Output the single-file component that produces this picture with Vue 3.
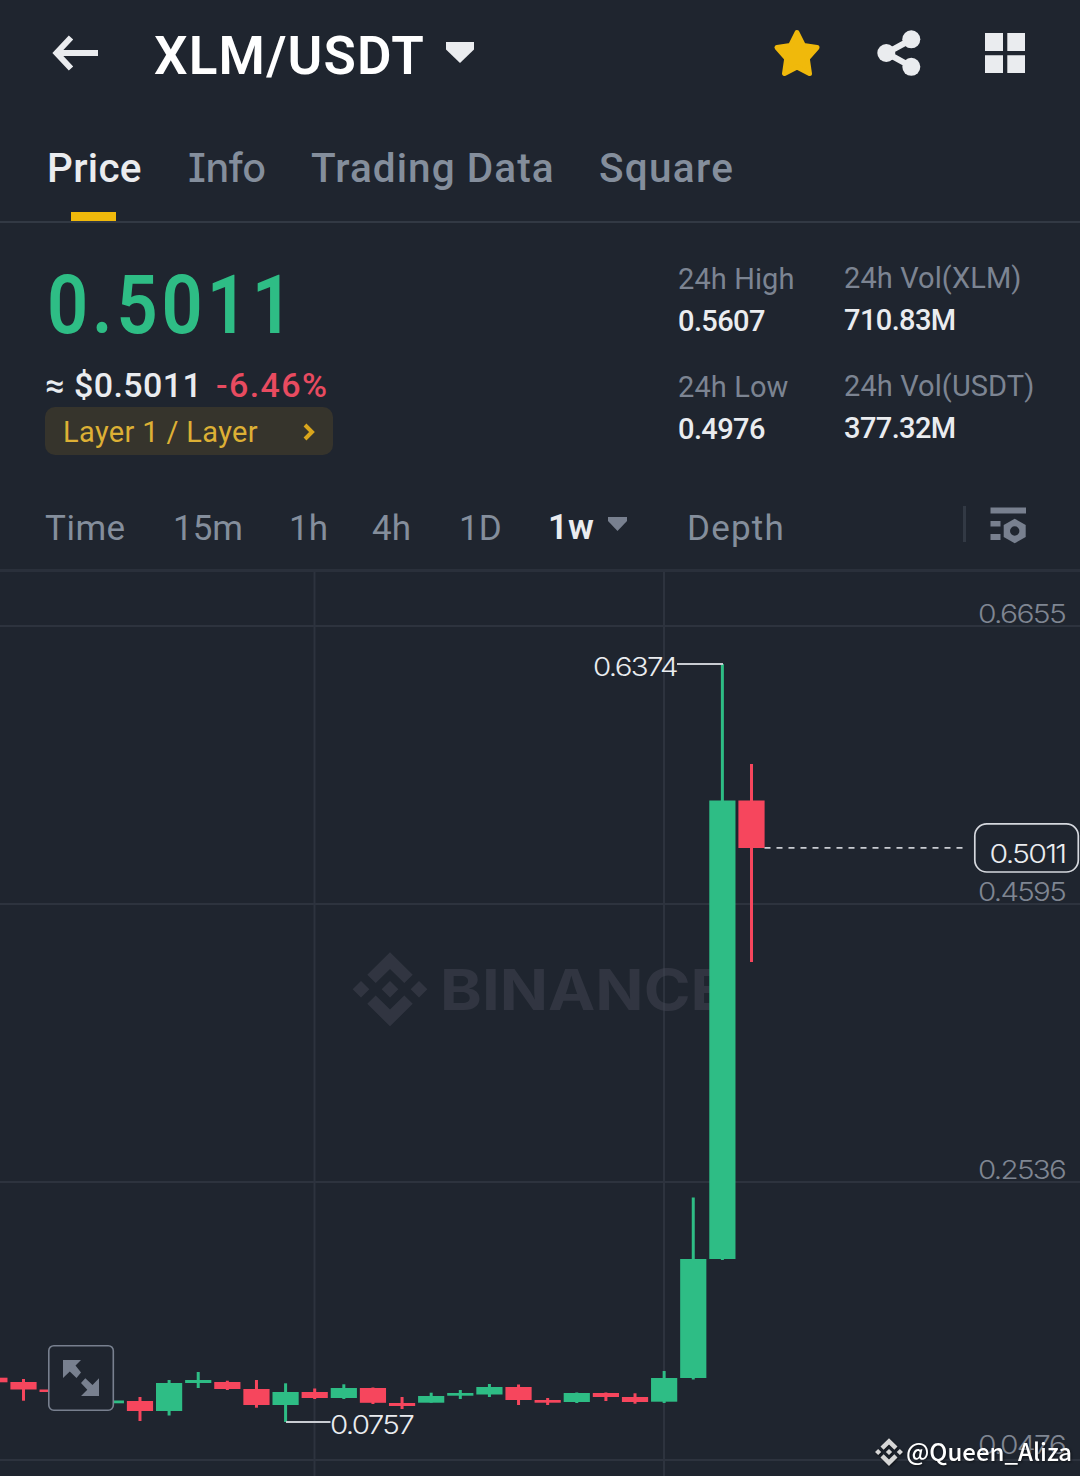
<script setup>
const tabs = [
  { label: 'Price', width: 94, gap: 0, spacing: 0.3, active: true },
  { label: 'Info', width: 77, gap: 47, spacing: -0.4, serifI: true },
  { label: 'Trading Data', width: 242, gap: 46, spacing: 1.05 },
  { label: 'Square', width: 134, gap: 46, spacing: 1.3 },
]

const stats = [
  [
    { label: '24h High', value: '0.5607' },
    { label: '24h Low', value: '0.4976' },
  ],
  [
    { label: '24h Vol(XLM)', value: '710.83M' },
    { label: '24h Vol(USDT)', value: '377.32M' },
  ],
]

const intervals = [
  { label: 'Time', width: 128 },
  { label: '15m', width: 116 },
  { label: '1h', width: 83 },
  { label: '4h', width: 87 },
  { label: '1D', width: 89 },
]

// Newest first: [rising, high, body top, body bottom, low]
const candleRows = [
  [0, 764, 800.5, 848, 962],
  [1, 664, 800.5, 1259, 1260],
  [1, 1197.5, 1259, 1378, 1379.5],
  [1, 1371, 1378, 1401.7, 1403],
  [0, 1393.3, 1397, 1402, 1403.7],
  [0, 1392.5, 1393, 1397, 1401],
  [1, 1392.5, 1393, 1402, 1403],
  [0, 1398, 1400, 1402.7, 1405],
  [0, 1384.5, 1387, 1400, 1405],
  [1, 1384, 1387, 1394.5, 1397],
  [1, 1390, 1393, 1395.7, 1399],
  [1, 1392.7, 1396, 1402.7, 1402.7],
  [0, 1397, 1403, 1406, 1409],
  [0, 1387.5, 1388, 1402.8, 1404],
  [1, 1384.3, 1388, 1398, 1399],
  [0, 1388.5, 1392, 1398, 1399],
  [1, 1383.3, 1392, 1405, 1422],
  [0, 1380, 1389, 1405, 1407.7],
  [0, 1380.7, 1382, 1389, 1390],
  [1, 1372, 1380, 1383, 1388],
  [1, 1380, 1383, 1411, 1415.5],
  [0, 1397, 1401, 1411, 1421],
  [1, 1400.5, 1400.5, 1403.3, 1403.3],
  [0, 1392, 1395, 1398, 1399],
  [0, 1389.5, 1389.5, 1392, 1392],
  [0, 1379, 1382, 1389.5, 1400.7],
  [0, 1377.7, 1377.7, 1382.3, 1382.3],
]
const candles = candleRows.map(([up, high, top, bottom, low], i) => ({
  x: 751.5 - i * 29.12,
  color: up ? '#2ebd85' : '#f6465d',
  high, top, bottom, low,
}))

const axis = [
  { label: '0.6655', y: 623 },
  { label: '0.4595', y: 901 },
  { label: '0.2536', y: 1179 },
  { label: '0.0476', y: 1454 },
]
const gridRows = [626, 904, 1182, 1460]
const gridCols = [314.5, 664]
</script>

<template>
  <div class="screen">
    <header class="header">
      <svg class="back" width="48" height="40" viewBox="51 33 48 40">
        <path d="M98 53H57M71 37.500L56.500 53L71 68.500" fill="none" stroke="#eaecef" stroke-width="6" />
      </svg>
      <h1 class="title">XLM/USDT</h1>
      <svg class="caret" width="28" height="22" viewBox="446 42 28 22">
        <path d="M446 42H474V49.500L460 63L446 49.500Z" fill="#eaecef" />
      </svg>
      <div class="actions">
        <svg width="48" height="50" viewBox="773 28 48 50">
          <path d="M797 32.500L803.500 45.500L817 47.500L807.300 58.500L809.500 73.500L797 67L784.500 73.500L786.700 58.500L777 47.500L790.500 45.500Z" fill="#f0b90b" stroke="#f0b90b" stroke-width="5" stroke-linejoin="round" />
        </svg>
        <svg width="44" height="50" viewBox="877 28 44 50">
          <path d="M911.300 39.500L886.500 53L911.300 66.700" fill="none" stroke="#eaecef" stroke-width="6" />
          <g fill="#eaecef">
            <circle cx="911.300" cy="39.300" r="9" />
            <circle cx="886.300" cy="53" r="9" />
            <circle cx="911.300" cy="66.800" r="9" />
          </g>
        </svg>
        <svg width="40" height="40" viewBox="0 0 40 40">
          <path d="M0 0H18V18H0ZM22.300 0H40V18H22.300ZM0 22.300H18V40H0ZM22.300 22.300H40V40H22.300Z" fill="#eaecef" />
        </svg>
      </div>
    </header>

    <nav class="tabs">
      <div
        v-for="t in tabs"
        :key="t.label"
        class="tab"
        :class="{ active: t.active, 'serif-i': t.serifI }"
        :style="{ width: t.width + 'px', marginLeft: t.gap + 'px', letterSpacing: t.spacing + 'px' }"
      >{{ t.label }}</div>
    </nav>

    <section class="summary">
      <div class="quote">
        <div class="price">0.5011</div>
        <div class="sub">
          <span class="approx">≈</span>
          <span class="fiat">$0.5011</span>
          <span class="change">-6.46%</span>
        </div>
        <div class="tag">
          <span>Layer 1 / Layer</span>
          <svg width="12" height="18" viewBox="0 0 12 18">
            <path d="M2 2L9 9L2 16" fill="none" stroke="#d9a51c" stroke-width="4" />
          </svg>
        </div>
      </div>
      <div v-for="(col, i) in stats" :key="i" class="stats" :class="'stats-' + i">
        <template v-for="s in col" :key="s.label">
          <div class="stat-label">{{ s.label }}</div>
          <div class="stat-value">{{ s.value }}</div>
        </template>
      </div>
    </section>

    <div class="intervals">
      <span v-for="iv in intervals" :key="iv.label" :style="{ width: iv.width + 'px' }">{{ iv.label }}</span>
      <span class="selected">1w</span>
      <svg class="mini-caret" width="19" height="14" viewBox="0 0 19 14">
        <path d="M0 0H19V4L9.500 14L0 4Z" fill="#78808f" />
      </svg>
      <span class="depth">Depth</span>
      <i class="divider"></i>
      <svg class="settings" width="36" height="38" viewBox="990 506 36 38">
        <g fill="#78808f">
          <path d="M990.500 507.500H1026V513.500H990.500ZM990.500 521H1000.500V526.500H990.500ZM990.500 534H1000.500V540H990.500Z" />
          <path fill-rule="evenodd" d="M1014.700 518.700L1025.700 525V537L1014.700 543.300L1003.700 537V525ZM1014.700 526.300A4.700 4.700 0 1 0 1014.700 535.700A4.700 4.700 0 1 0 1014.700 526.300Z" />
        </g>
      </svg>
    </div>

    <svg class="chart" width="1080" height="904" viewBox="0 572 1080 904">
      <defs>
        <g id="mark">
          <path d="M0 -37L22.700 -14.500L14.300 -6.200L0 -20.300L-14.300 -6.200L-22.700 -14.500ZM0 37L22.700 14.500L14.300 6.200L0 20.300L-14.300 6.200L-22.700 14.500Z" />
          <path d="M0 -8.300L8.300 0L0 8.300L-8.300 0ZM-29 -8.300L-20.700 0L-29 8.300L-37.300 0ZM29 -8.300L37.300 0L29 8.300L20.700 0Z" />
        </g>
      </defs>

      <g stroke="#2d333e" stroke-width="2">
        <line v-for="y in gridRows" :key="y" x1="0" x2="1080" :y1="y" :y2="y" />
        <line v-for="x in gridCols" :key="x" y1="572" y2="1476" :x1="x" :x2="x" />
      </g>

      <g fill="#474a57" opacity="0.45">
        <use href="#mark" x="390" y="989.300" />
        <text class="brand" x="440" y="1010" textLength="289" lengthAdjust="spacingAndGlyphs">BINANCE</text>
      </g>

      <g v-for="c in candles" :key="c.x" :fill="c.color">
        <rect :x="c.x - 1.500" :y="c.high" width="3" :height="c.low - c.high" />
        <rect :x="c.x - 13.100" :y="c.top" width="26.200" :height="c.bottom - c.top" />
      </g>

      <g stroke="#c9ccd2" stroke-width="1.800">
        <line x1="677" x2="723" y1="664" y2="664" />
        <line x1="286" x2="330.500" y1="1422" y2="1422" />
        <line x1="764.500" x2="963" y1="847.800" y2="847.800" stroke-dasharray="6 6" />
      </g>

      <g class="num" fill="#7f8692">
        <text v-for="a in axis" :key="a.label" x="978" :y="a.y" textLength="87" lengthAdjust="spacingAndGlyphs">{{ a.label }}</text>
      </g>
      <rect x="974.800" y="823.800" width="103.500" height="48.200" rx="12" fill="#1f252f" stroke="#d5d8de" stroke-width="1.700" />
      <g class="num" fill="#eaecef">
        <text x="593" y="676" textLength="84" lengthAdjust="spacingAndGlyphs">0.6374</text>
        <text x="330" y="1434" textLength="83" lengthAdjust="spacingAndGlyphs">0.0757</text>
        <text x="989.500" y="863" textLength="76" lengthAdjust="spacingAndGlyphs">0.5011</text>
      </g>

      <rect x="48.800" y="1345.700" width="64.500" height="64.500" rx="5" fill="#1f252f" stroke="#78808f" stroke-width="1.600" />
      <path d="M63 1360H81L75.500 1365.500L81 1372.500L76.500 1378L69.800 1371.500L63 1378ZM99 1396H81L87.300 1389.700L81 1383L85.300 1378.300L92.500 1385L99 1378.300Z" fill="#78808f" />

      <g class="credit">
        <use href="#mark" transform="translate(889 1452) scale(0.375)" fill="#d6d6d6" />
        <text x="906" y="1461" textLength="166" fill="#fff">@Queen_Aliza</text>
      </g>
    </svg>
  </div>
</template>

<style>
body {
  margin: 0;
  background: #1f252f;
}
</style>

<style scoped>
.screen {
  width: 1080px;
  height: 1476px;
  overflow: hidden;
  background: #1f252f;
  color: #eaecef;
  font-family: Roboto, "Liberation Sans", sans-serif;
  white-space: nowrap;
}
svg {
  display: block;
  flex: none;
}
.header {
  display: flex;
  align-items: center;
  height: 106px;
  padding: 0 55px 0 51px;
}
.title {
  width: 270px;
  margin: 0 22px 0 55px;
  padding-top: 6px;
  color: #fff;
  font-size: 53px;
  font-weight: 600;
  line-height: 60px;
  letter-spacing: 1.2px;
}
.actions {
  display: flex;
  align-items: center;
  margin-left: auto;
}
.actions svg:nth-child(2) {
  margin: 0 64px 0 56px;
}
.tabs {
  display: flex;
  height: 115px;
  padding-left: 47px;
  border-bottom: 2px solid #323944;
}
.tab {
  display: flex;
  flex-direction: column;
  align-items: stretch;
  height: 73px;
  padding-top: 42px;
  color: #848e9c;
  font-size: 40.5px;
  font-weight: 500;
  line-height: 40px;
}
.serif-i {
  font-family: Inter, sans-serif;
  font-size: 39.5px;
  font-feature-settings: "cv08";
}
.active {
  color: #eaecef;
}
.active::after {
  content: "";
  width: 45px;
  height: 9px;
  margin: auto 0 0 24px;
  background: #f0b90b;
}
.summary {
  display: flex;
  height: 259px;
  padding-left: 45px;
}
.quote {
  width: 633px;
  padding-top: 42px;
}
.price {
  width: 300px;
  margin-left: 2px;
  color: #2ebd85;
  font-size: 82px;
  font-weight: 600;
  line-height: 80px;
  letter-spacing: 4.4px;
  transform: scaleX(0.88);
  transform-origin: left;
}
.sub {
  display: flex;
  margin: 20px 0 2px;
  font-size: 34px;
  font-weight: 500;
  line-height: 40px;
}
.approx {
  width: 29px;
}
.fiat {
  width: 142px;
  letter-spacing: 0.4px;
}
.change {
  color: #e84b60;
  letter-spacing: 1.4px;
}
.tag {
  display: flex;
  align-items: center;
  justify-content: space-between;
  box-sizing: border-box;
  width: 288px;
  height: 48px;
  padding: 1px 18px 0 18px;
  border-radius: 10px;
  background: #36342c;
  color: #ddb035;
  font-size: 29px;
  letter-spacing: 0.35px;
}
.stats {
  padding-top: 38px;
  font-size: 29px;
  line-height: 36px;
}
.stats-0 {
  width: 166px;
}
.stats-1 {
  padding-top: 37px;
}
.stat-label {
  margin-bottom: 6px;
  color: #7c8492;
  letter-spacing: 0.1px;
}
.stat-value {
  margin-bottom: 30px;
  font-weight: 500;
  letter-spacing: -0.6px;
}
.intervals {
  display: flex;
  align-items: center;
  height: 87px;
  padding: 0 54px 0 45px;
  border-bottom: 3px solid #2a303b;
  color: #848e9c;
  font-size: 35px;
}
.intervals span {
  padding-top: 5px;
  flex: none;
}
.intervals span:first-child {
  letter-spacing: 0.5px;
}
.intervals .selected {
  width: 60px;
  padding-top: 3px;
  color: #eaecef;
  font-weight: 600;
}
.mini-caret {
  margin-bottom: 3px;
}
.depth {
  margin-left: 60px;
  letter-spacing: 1.2px;
}
.divider {
  width: 3px;
  height: 36px;
  margin: 0 24px 3px auto;
  background: #323944;
}
.settings {
  margin-bottom: 2px;
}
.num {
  font-family: Inter, sans-serif;
  font-size: 26px;
  font-weight: 300;
  letter-spacing: -1.5px;
}
.brand {
  font-family: Inter, sans-serif;
  font-size: 57px;
  font-weight: 700;
}
.credit {
  font-family: "Noto Sans CJK SC", sans-serif;
  font-size: 24px;
  font-weight: 500;
  filter: drop-shadow(1px 1px 1px #0008);
}
</style>
